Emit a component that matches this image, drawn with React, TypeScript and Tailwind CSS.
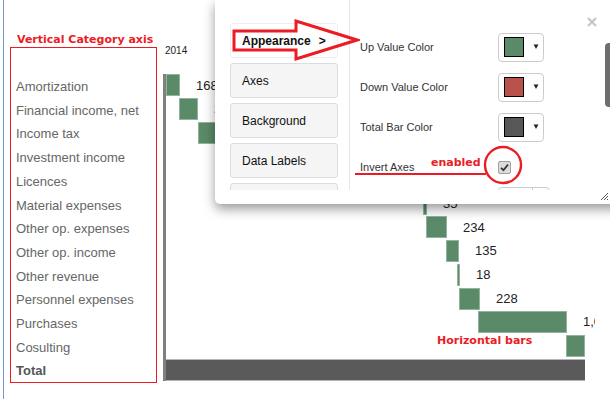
import React from "react";

type Bar = { name: string; left: number; width: number; label?: string };

const rows: Bar[] = [
	{ name: "Amortization", left: 0, width: 14, label: "168" },
	{ name: "Financial income, net", left: 13, width: 19, label: "211" },
	{ name: "Income tax", left: 32, width: 40 },
	{ name: "Investment income", left: 72, width: 90 },
	{ name: "Licences", left: 162, width: 95 },
	{ name: "Material expenses", left: 257, width: 4, label: "35" },
	{ name: "Other op. expenses", left: 260, width: 21, label: "234" },
	{ name: "Other op. income", left: 280, width: 13, label: "135" },
	{ name: "Other revenue", left: 291, width: 3, label: "18" },
	{ name: "Personnel expenses", left: 293, width: 21, label: "228" },
	{ name: "Purchases", left: 312, width: 89, label: "1,012" },
	{ name: "Cosulting", left: 400, width: 19 },
];

const menu = ["Axes", "Background", "Data Labels", ""];

const ColorPicker = ({ color }: { color: string }) => (
	<div className="flex h-[29px] w-[46px] shrink-0 items-center gap-[8px] rounded-[4px] border border-[#cccccc] pl-[5px]">
		<span className={`h-[20px] w-[20px] border border-black ${color}`} />
		<span className="text-[8px] text-[#222]">▼</span>
	</div>
);

const App = () => {
	return (
		<div className="relative h-[399px] w-[610px] overflow-hidden bg-white pl-[3px] font-['Liberation_Sans',Arial,sans-serif]">
			<div className="h-full border-l border-[#7099d0]">
				{/* chart */}
				<div className="flex pt-[45px]">
					<div className="flex w-[159px] flex-col pl-[12px] pt-[30px]">
						{rows.map((r) => (
							<div key={r.name} className="flex h-[23.7px] items-center text-[13px] text-[#666]">
								{r.name}
							</div>
						))}
						<div className="flex h-[23.7px] items-center text-[13px] font-bold text-[#555]">Total</div>
					</div>
					<div className="flex w-[432px] flex-col">
						<div className="h-[28.5px] pl-[2px] text-[10px] leading-[12px] text-[#222]">2014</div>
						<div className="flex flex-col overflow-hidden border-l-[3px] border-[#808080]">
							{rows.map((r) => (
								<div key={r.name} className="flex h-[23.7px] items-center whitespace-nowrap">
									<div
										className="h-[22px] shrink-0 border border-[#93b39d] bg-[#5b8a69]"
										style={{ marginLeft: r.left, width: r.width }}
									/>
									{r.label && <span className="ml-[16px] text-[13px] text-[#222]">{r.label}</span>}
								</div>
							))}
							<div className="flex h-[23.7px] items-center">
								<div className="h-[22px] w-[419px] border-y border-[#b5b5b5] bg-[#5a5a5a]" />
							</div>
						</div>
					</div>
				</div>
			</div>

			{/* settings dialog */}
			<div className="absolute left-[215px] top-0 h-[204px] w-[420px] rounded-bl-[5px] bg-white shadow-[0_5px_12px_rgba(0,0,0,0.4)]">
				<div className="flex h-[190px] overflow-hidden">
					<div className="ml-[15px] mt-[23px] flex w-[108px] shrink-0 flex-col gap-[5px]">
						<div className="flex h-[35px] shrink-0 items-center rounded-[3px] border border-[#eeeeee] bg-white pl-[11px] text-[12px] font-bold text-[#111]">
							Appearance<span className="ml-[8px]">&gt;</span>
						</div>
						{menu.map((m, i) => (
							<div
								key={i}
								className="flex h-[35px] shrink-0 items-center rounded-[3px] border border-[#dddddd] bg-[#f5f5f5] pl-[11px] text-[12px] text-[#111]"
							>
								{m}
							</div>
						))}
					</div>
					<div className="ml-[11px] w-px shrink-0 bg-[#e6e6e6]" />
					<div className="ml-[10px] mt-[27px] flex w-[200px] flex-col text-[11px] text-[#333]">
						<div className="flex h-[40px] shrink-0 items-center">
							<span className="w-[138px]">Up Value Color</span>
							<ColorPicker color="bg-[#5b8a69]" />
						</div>
						<div className="flex h-[40px] shrink-0 items-center">
							<span className="w-[138px]">Down Value Color</span>
							<ColorPicker color="bg-[#b9524b]" />
						</div>
						<div className="flex h-[40px] shrink-0 items-center">
							<span className="w-[138px]">Total Bar Color</span>
							<ColorPicker color="bg-[#575757]" />
						</div>
						<div className="flex h-[40px] shrink-0 items-center">
							<span className="w-[138px]">Invert Axes</span>
							<span className="flex h-[13px] w-[13px] items-center justify-center rounded-[2px] border border-[#a0a0a0] bg-[#dcdcdc]">
								<svg width="9" height="9" viewBox="0 0 9 9">
									<path d="M1 4.8 L3.5 7.2 L8 1.5" fill="none" stroke="#333" strokeWidth="1.8" />
								</svg>
							</span>
						</div>
						<div className="flex h-[40px] shrink-0 items-start">
							<span className="w-[138px]" />
							<div className="flex h-[29px] w-[52px] rounded-[4px] border border-[#cccccc]">
								<div className="w-[34px] border-r border-[#cccccc]" />
							</div>
						</div>
					</div>
				</div>
				<svg className="absolute left-[372px] top-[17px]" width="10" height="10" viewBox="0 0 10 10">
					<path d="M1 1 L9 9 M9 1 L1 9" stroke="#c8c8c8" strokeWidth="2.4" />
				</svg>
				<div className="absolute left-[390px] top-[43px] h-[64px] w-[10px] rounded-[4px] bg-[#6e6e6e]" />
				<svg className="absolute left-[385px] top-[192px]" width="9" height="9" viewBox="0 0 9 9">
					<path d="M8 1 L1 8 M8 4 L4 8 M8 7 L7 8" stroke="#555" strokeWidth="1" />
				</svg>
			</div>

			{/* annotations */}
			<div className="absolute left-[10px] top-[47px] h-[336px] w-[147px] border border-[#ec1c24]" />
			<div className="absolute left-[17px] top-[33px] font-['DejaVu_Sans',Verdana,sans-serif] text-[11px] font-bold leading-[14px] text-[#ec1c24]">
				Vertical Category axis
			</div>
			<svg className="absolute left-[232px] top-[19px]" width="128" height="43" viewBox="0 0 128 43">
				<polygon
					points="2,12 64,12 64,2 125,21 64,40 64,31 2,31"
					fill="none"
					stroke="#ec1c24"
					strokeWidth="3"
				/>
			</svg>
			<div className="absolute left-[431px] top-[156px] font-['DejaVu_Sans',Verdana,sans-serif] text-[11px] font-bold leading-[14px] text-[#ec1c24]">
				enabled
			</div>
			<div className="absolute left-[355px] top-[173px] h-[2px] w-[131px] bg-[#ec1c24]" />
			<svg className="absolute left-[483px] top-[145px]" width="40" height="40" viewBox="0 0 40 40">
				<circle cx="20" cy="20" r="18" fill="none" stroke="#ec1c24" strokeWidth="2.4" />
			</svg>
			<div className="absolute left-[437px] top-[334px] font-['DejaVu_Sans',Verdana,sans-serif] text-[11px] font-bold leading-[14px] text-[#ec1c24]">
				Horizontal bars
			</div>
		</div>
	);
};

export default App;
